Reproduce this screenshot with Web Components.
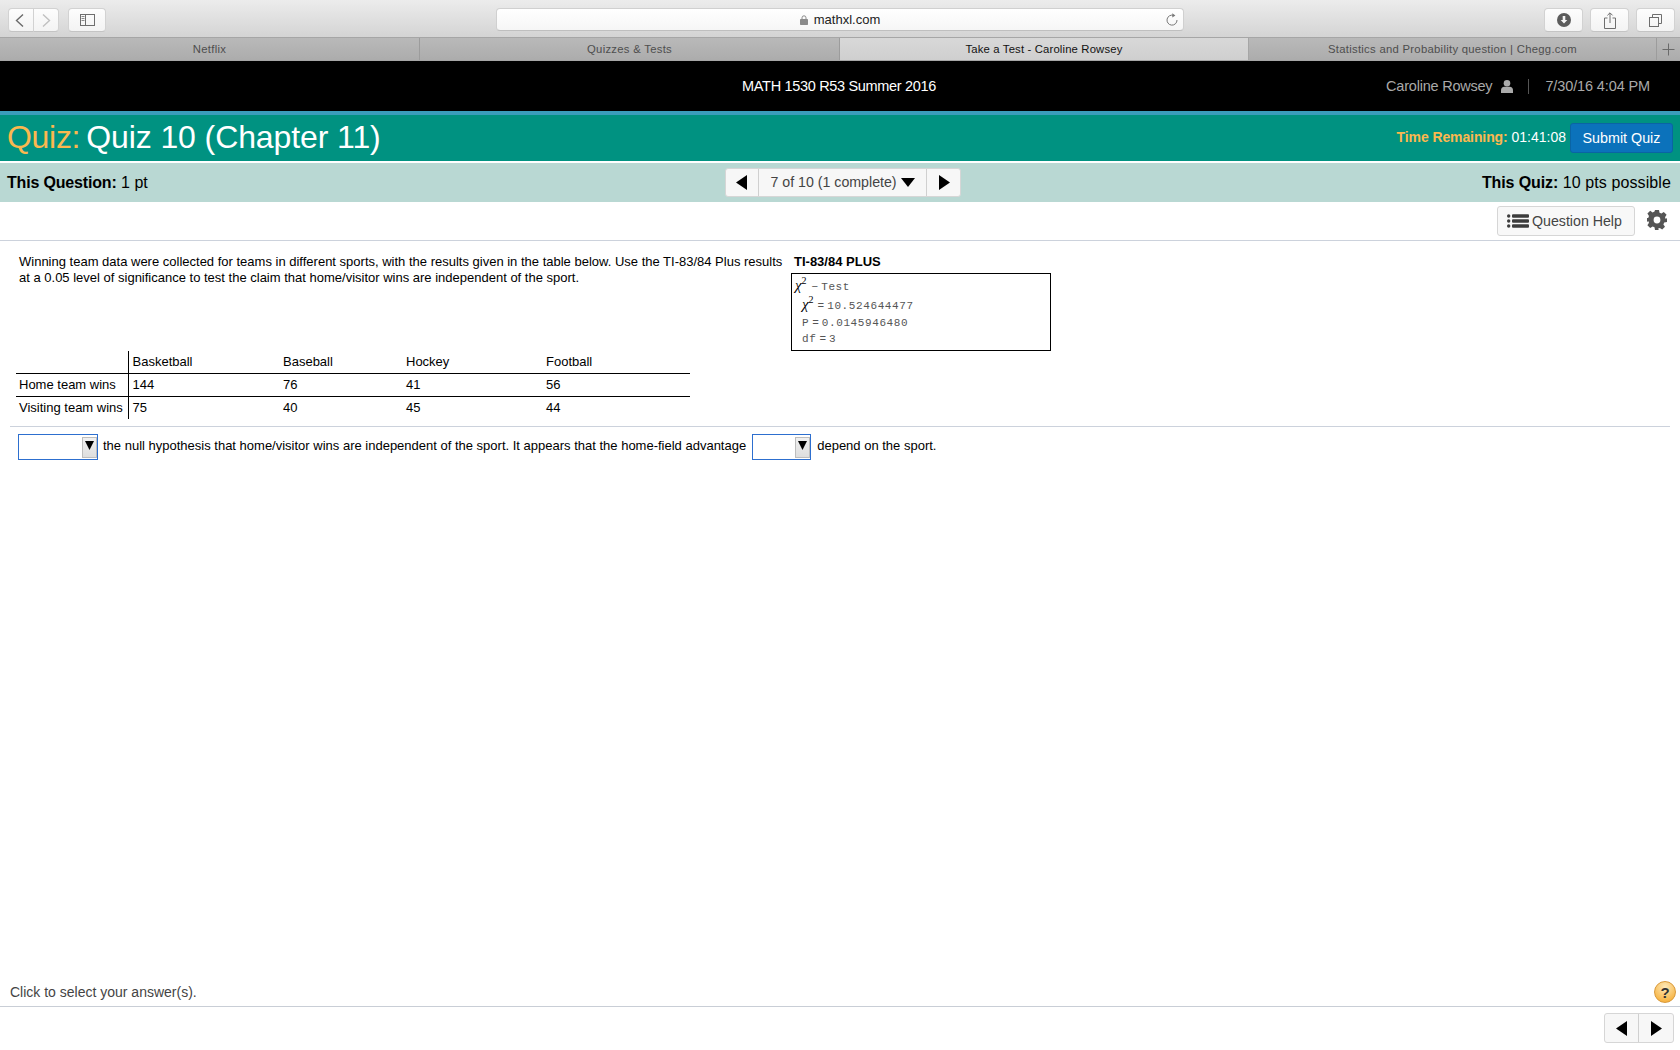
<!DOCTYPE html>
<html lang="en"><head><meta charset="utf-8"><title>Take a Test - Caroline Rowsey</title>
<style>
html,body{margin:0;padding:0;background:#fff}
body{width:1680px;height:1050px;overflow:hidden;font-family:"Liberation Sans",Arial,sans-serif;color:#000}
quiz-app{display:flex;flex-direction:column;height:1050px}
</style></head><body>
<quiz-app>
  <browser-toolbar></browser-toolbar>
  <browser-tabs></browser-tabs>
  <course-header></course-header>
  <quiz-title></quiz-title>
  <quiz-info></quiz-info>
  <help-bar></help-bar>
  <question-pane></question-pane>
  <status-bar></status-bar>
  <footer-nav></footer-nav>
</quiz-app>
<script>
const LEFT='<svg width="12" height="15" viewBox="0 0 12 15"><path d="M11 0V15L0 7.5Z" fill="#000"/></svg>';
const RIGHT='<svg width="12" height="15" viewBox="0 0 12 15"><path d="M1 0V15L12 7.5Z" fill="#000"/></svg>';
function def(name,html,setup){
  customElements.define(name,class extends HTMLElement{
    constructor(){super();this.attachShadow({mode:'open'}).innerHTML=html;}
    connectedCallback(){if(setup)setup(this);}
  });
}
def('quiz-app','<style>:host{display:flex;flex-direction:column}</style><slot></slot>');

def('tool-button',`<style>:host{display:flex;align-items:center;justify-content:center;height:22px;box-sizing:content-box;background:linear-gradient(#fdfdfd,#f3f3f3);border:1px solid #d2d2d2;border-bottom-color:#c4c4c4;border-radius:4px}</style><slot></slot>`);

def('browser-toolbar',`<style>
:host{display:flex;align-items:flex-start;height:37px;box-sizing:border-box;padding:8px 7px 0 8px;background:linear-gradient(#ececec,#d4d4d4);font-family:"Liberation Sans",Arial,sans-serif}
.url{width:688px;margin-left:390px;margin-right:360px;height:23px;box-sizing:border-box;flex:none;display:flex;align-items:center;background:linear-gradient(#fff,#f6f6f6);border:1px solid #d0d0d0;border-bottom-color:#bfbfbf;border-radius:4px}
.mid{flex:1;display:flex;justify-content:center;align-items:center;gap:6px;font-size:13px;color:#222;padding-left:18px}
.r{margin:0 4px 0 0;display:flex}
tool-button{flex:none}
.s{margin-left:9px}
.right{display:flex;gap:7px}
.right tool-button{width:37px}
</style>
<tool-button style="width:24px;border-radius:4px 0 0 4px"><svg style="margin-right:3px" width="11" height="15" viewBox="0 0 11 15"><path d="M9 1.5L2.5 7.5L9 13.5" fill="none" stroke="#6a6a6a" stroke-width="1.4"/></svg></tool-button>
<tool-button style="width:24px;border-radius:0 4px 4px 0;border-left:0"><svg width="11" height="15" viewBox="0 0 11 15"><path d="M2 1.5L8.5 7.5L2 13.5" fill="none" stroke="#c0c0c0" stroke-width="1.4"/></svg></tool-button>
<tool-button class="s" style="width:36px"><svg width="15" height="12" viewBox="0 0 15 12"><rect x=".5" y=".5" width="14" height="11" fill="none" stroke="#6e6e6e"/><path d="M5.5 .5V11.5" stroke="#6e6e6e"/><path d="M1.5 2.5h3M1.5 4.5h3M1.5 6.5h3" stroke="#8a8a8a"/></svg></tool-button>
<div class="url"><div class="mid"><svg width="8" height="10" viewBox="0 0 8 10"><path d="M2 4.5V2.8a2 2 0 014 0V4.5" fill="none" stroke="#8a8a8a"/><rect y="4" width="8" height="6" rx=".7" fill="#8a8a8a"/></svg><span>mathxl.com</span></div>
<div class="r"><svg width="14" height="14" viewBox="0 0 14 14"><path d="M8.6 2.4A5 5 0 1 0 12 7" fill="none" stroke="#777" stroke-width="1"/><path d="M7.3 .3L10.4 2.4L7.3 4.6Z" fill="#777"/></svg></div></div>
<div class="right">
<tool-button><svg width="14" height="14" viewBox="0 0 14 14"><circle cx="7" cy="7" r="7" fill="#5c5c5c"/><path d="M5.7 3h2.6v4h2L7 10.6 3.7 7h2z" fill="#f6f6f6"/></svg></tool-button>
<tool-button><svg width="12" height="17" viewBox="0 0 12 17"><path d="M3.5 6H.5V16.5H11.5V6H8.5" fill="none" stroke="#6e6e6e"/><path d="M6 1V11M3.4 3.4L6 .8 8.6 3.4" fill="none" stroke="#6e6e6e"/></svg></tool-button>
<tool-button><svg width="13" height="13" viewBox="0 0 13 13"><path d="M3.5 3V.5H12.5V9.5H9.5" fill="none" stroke="#6e6e6e"/><rect x=".5" y="3.5" width="9" height="9" fill="none" stroke="#6e6e6e"/></svg></tool-button>
</div>`);

def('browser-tabs',`<style>
:host{display:grid;grid-template-columns:420px 420px 409px 408px 23px;height:24px;box-sizing:border-box;border-top:1px solid #a6a6a6;border-bottom:1px solid #a6a6a6;background:#b0b0b0;font:11.3px "Liberation Sans",Arial,sans-serif;color:#4e4e4e;letter-spacing:.28px}
div{display:flex;align-items:center;justify-content:center;background:linear-gradient(#b9b9b9,#acacac);border-right:1px solid #9c9c9c;box-sizing:border-box}
.a{background:linear-gradient(#d8d8d8,#cfcfcf);color:#111;border-right:1px solid #a6a6a6;letter-spacing:.16px}
.p{border-right:0}
</style>
<div>Netflix</div><div>Quizzes &amp; Tests</div><div class="a">Take a Test - Caroline Rowsey</div><div>Statistics and Probability question | Chegg.com</div><div class="p"><svg width="13" height="13" viewBox="0 0 13 13"><path d="M6.5 .5V12.5M.5 6.5H12.5" stroke="#6a6a6a"/></svg></div>`);

def('course-header',`<style>
:host{display:grid;grid-template-columns:1fr auto 1fr;align-items:center;height:50px;box-sizing:border-box;background:#000;color:#fff;font:14.5px "Liberation Sans",Arial,sans-serif}
.c{margin-left:-2px;letter-spacing:-.33px}
.r{display:flex;justify-content:flex-end;align-items:center;color:#a9a9a9;padding-right:30px;letter-spacing:-.22px}
.d{letter-spacing:-.12px}
svg{margin-left:9px;margin-right:15px}
i{width:1px;height:15px;background:#555;margin-right:16px}
</style><div></div><div class="c">MATH 1530 R53 Summer 2016</div>
<div class="r"><span>Caroline Rowsey</span><svg width="12" height="13" viewBox="0 0 12 13"><circle cx="6" cy="3.3" r="3.3" fill="#aaa"/><path d="M0 13V10.2C0 8 1.4 6.8 3.2 6.8H8.8C10.6 6.8 12 8 12 10.2V13Z" fill="#aaa"/></svg><i></i><span class="d">7/30/16 4:04 PM</span></div>`);

def('quiz-title',`<style>
:host{display:flex;align-items:center;height:50px;box-sizing:border-box;background:#009281;border-top:4px solid #3a9dbb;padding:0 7px;color:#fff;font-family:"Liberation Sans",Arial,sans-serif}
h1{margin:-2px 0 0;font-size:32px;font-weight:400;flex:1;letter-spacing:-.1px;white-space:nowrap}
h1 b{font-weight:400;color:#fbb84f;margin-right:6px;letter-spacing:-.3px}
.t{font-size:14px;margin:-2px 4px 0 0}
.t b{color:#fbb84f;letter-spacing:-.1px}
.s{width:103px;height:30px;margin-top:-1px;box-sizing:border-box;background:#0b72bb;border:1px solid #0a64a4;border-radius:3px;display:flex;align-items:center;justify-content:center;font-size:14.3px}
</style><h1><b>Quiz:</b>Quiz 10 (Chapter 11)</h1><div class="t"><b>Time Remaining:</b> 01:41:08</div><div class="s">Submit Quiz</div>`);

def('pager-cell',`<style>:host{display:flex;align-items:center;justify-content:center;box-sizing:border-box;border-right:1px solid #d0d0d0}:host(:last-child){border-right:0}</style><slot></slot>`);
def('pager-group',`<style>:host{display:flex;align-items:stretch;background:#f7f7f7;border:1px solid #d6d6d6;border-radius:3px;box-sizing:border-box;flex:none}</style><slot></slot>`);

def('quiz-info',`<style>
:host{display:grid;grid-template-columns:718px 236px 1fr;align-items:center;height:41px;box-sizing:border-box;border-top:2px solid #fff;background:#b9d8d3;padding:0 9px 0 7px;font:16px "Liberation Sans",Arial,sans-serif}
.r{text-align:right;letter-spacing:.1px}
.r b{letter-spacing:-.1px}
.l b{letter-spacing:-.17px}
pager-group{height:29px;margin-top:-1px}
.txt{width:170px;color:#444;font-size:14.2px;gap:4px;white-space:nowrap}
</style><div class="l"><b>This Question:</b> 1 pt</div>
<pager-group><pager-cell style="width:33px">${LEFT}</pager-cell><pager-cell class="txt"><span>7 of 10 (1 complete)</span><svg width="14" height="9" viewBox="0 0 14 9"><path d="M0 0H14L7 9Z" fill="#000"/></svg></pager-cell><pager-cell style="width:33px">${RIGHT}</pager-cell></pager-group>
<div class="r"><b>This Quiz:</b> 10 pts possible</div>`);

def('help-bar',`<style>
:host{display:flex;justify-content:flex-end;align-items:flex-start;height:39px;box-sizing:border-box;border-bottom:1px solid #ccd2dc;padding:4px 13px 0 0;font-family:"Liberation Sans",Arial,sans-serif}
.b{width:138px;height:30px;box-sizing:border-box;background:#f8f8f8;border:1px solid #d6d6d6;border-radius:3px;display:flex;align-items:center;gap:3px;padding-left:9px;color:#444;font-size:14.2px}
svg.g{margin-left:12px;margin-top:4px}
</style><div class="b"><svg width="22" height="14" viewBox="0 0 22 14"><g fill="#3c3c3c"><circle cx="1.7" cy="2" r="1.7"/><circle cx="1.7" cy="7" r="1.7"/><circle cx="1.7" cy="12" r="1.7"/><rect x="5" y=".3" width="17" height="3.4" rx="1"/><rect x="5" y="5.3" width="17" height="3.4" rx="1"/><rect x="5" y="10.3" width="17" height="3.4" rx="1"/></g></svg><span>Question Help</span></div>
<svg class="g" width="20" height="20" viewBox="0 0 20 20"><path fill="#555" fill-rule="evenodd" d="M8 0h4l.5 2.8 1.9.8 2.4-1.6 2.8 2.8-1.6 2.4.8 1.9L20 8v4l-2.8.5-.8 1.9 1.6 2.4-2.8 2.8-2.4-1.6-1.9.8L12 20H8l-.5-2.8-1.9-.8L3.2 18 .4 15.2 2 12.8l-.8-1.9L0 12V8l1.2-.1.8-1.9L.4 3.6 3.2.8 5.6 2.4l1.9-.8zM10 6.6a3.4 3.4 0 100 6.8 3.4 3.4 0 000-6.8z"/></svg>`);

def('calc-output',`<style>
:host{display:block;width:260px;height:78px;box-sizing:border-box;border:1px solid #000;padding:3px 0 0 3px;font:11px "Liberation Mono","Courier New",monospace;letter-spacing:.6px;color:#555}
div{height:17px;line-height:17px;white-space:nowrap}
.x{font:italic 15px "Liberation Serif",serif;color:#000;letter-spacing:0}
sup{font-size:10px;font-style:normal;line-height:0;vertical-align:6px;margin-left:0}
.i{padding-left:7px}
.e{margin:0 3px 0 3px;letter-spacing:0}
</style>
<div style="height:19px;line-height:19px"><span class="x">χ<sup>2</sup></span><span class="e" style="margin-left:5px;margin-right:3px">−</span>Test</div>
<div class="i" style="height:19px;line-height:19px"><span class="x">χ<sup>2</sup></span><span class="e" style="margin-left:4px">=</span>10.524644477</div>
<div class="i">P<span class="e">=</span>0.0145946480</div>
<div class="i" style="height:15px;line-height:15px">df<span class="e">=</span>3</div>`);

def('data-table',`<style>
:host{display:block;margin-left:16px;width:674px}
table{border-collapse:collapse;table-layout:fixed;width:674px;font:13px "Liberation Sans",Arial,sans-serif}
td{padding:0 0 1px 4px;box-sizing:border-box;height:22px;line-height:15px;white-space:nowrap}
td:first-child{padding-left:3px;border-right:1px solid #000}
tr+tr td{border-top:1px solid #000;height:23px}
</style>
<table><colgroup><col style="width:112px"><col style="width:151px"><col style="width:123px"><col style="width:140px"><col></colgroup>
<tr><td></td><td>Basketball</td><td>Baseball</td><td>Hockey</td><td>Football</td></tr>
<tr><td>Home team wins</td><td>144</td><td>76</td><td>41</td><td>56</td></tr>
<tr><td>Visiting team wins</td><td>75</td><td>40</td><td>45</td><td>44</td></tr></table>`);

def('select-box',`<style>
:host{display:inline-flex;justify-content:flex-end;align-items:center;box-sizing:border-box;height:26px;border:1px solid #2d6fcf;background:#fff;flex:none}
.a{width:15px;height:21px;box-sizing:border-box;background:linear-gradient(#f0f0f0,#dedede);border:1px solid #bdbdbd;display:flex;align-items:flex-start;justify-content:center;padding-top:3px}
</style><div class="a"><svg width="9" height="9" viewBox="0 0 9 9"><path d="M0 0H9L4.5 9Z" fill="#000"/></svg></div>`);

def('question-pane',`<style>
:host{display:block;flex:1;font:13px "Liberation Sans",Arial,sans-serif}
.top{display:flex;height:110px;box-sizing:border-box;padding:13px 0 0 19px}
.q{width:772px;line-height:16px}
.calc b{display:block;height:19px;line-height:16px;padding-left:3px}
hr{margin:7px 10px 7px;border:0;height:1px;background:#ccd2dc}
.ans{display:flex;align-items:center;padding-left:18px;white-space:nowrap}
.ans span{padding-bottom:4px}
.ans span:nth-of-type(1){margin:0 6px 0 5px}
.ans span:nth-of-type(2){margin-left:6px}
</style>
<div class="top"><div class="q">Winning team data were collected for teams in different sports, with the results given in the table below. Use the TI-83/84 Plus results<br>at a 0.05 level of significance to test the claim that home/visitor wins are independent of the sport.</div>
<div class="calc"><b>TI-83/84 PLUS</b><calc-output></calc-output></div></div>
<data-table></data-table>
<hr>
<div class="ans"><select-box style="width:80px"></select-box><span>the null hypothesis that home/visitor wins are independent of the sport. It appears that the home-field advantage</span><select-box style="width:59px"></select-box><span>depend on the sport.</span></div>`);

def('status-bar',`<style>
:host{display:flex;align-items:center;justify-content:space-between;height:26px;box-sizing:border-box;padding:0 4px 3px 10px;border-bottom:1px solid #c9ced6;font:14px "Liberation Sans",Arial,sans-serif;color:#444}
.h{width:22px;height:22px;border-radius:50%;background:radial-gradient(circle at 50% 25%,#fee9b8,#f7b545 78%);border:1px solid #d9993a;box-sizing:border-box;display:flex;align-items:center;justify-content:center;font:700 15px "Liberation Sans",Arial,sans-serif;color:#333}
</style><div>Click to select your answer(s).</div><div class="h">?</div>`);

def('footer-nav',`<style>
:host{display:flex;justify-content:flex-end;height:43px;box-sizing:border-box;padding:6px 6px 0 0}
pager-group{height:30px}
</style><pager-group><pager-cell style="width:34px">${LEFT}</pager-cell><pager-cell style="width:34px">${RIGHT}</pager-cell></pager-group>`);
</script>
</body></html>
